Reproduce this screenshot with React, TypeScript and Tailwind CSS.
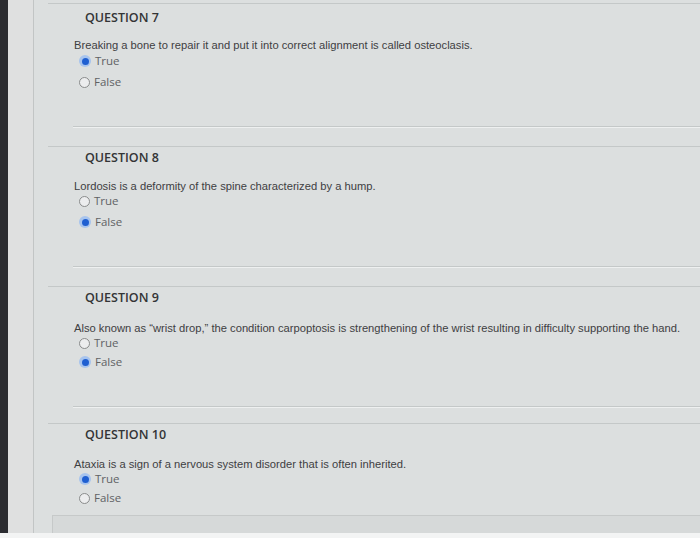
import React from "react";

type Q = { n: number; text: string; sel: "True" | "False"; pt: string; gapText: string; h: string; optMt: string; gap: string };

const qs: Q[] = [
  { n: 7, text: "Breaking a bone to repair it and put it into correct alignment is called osteoclasis.", sel: "True", pt: "pt-[5px]", gapText: "mt-[13px]", h: "h-[143px]", optMt: "mt-[4px]", gap: "gap-[9px]" },
  { n: 8, text: "Lordosis is a deformity of the spine characterized by a hump.", sel: "False", pt: "pt-[2px]", gapText: "mt-[14px]", h: "h-[140px]", optMt: "mt-[3px]", gap: "gap-[9px]" },
  { n: 9, text: "Also known as \u201cwrist drop,\u201d the condition carpoptosis is strengthening of the wrist resulting in difficulty supporting the hand.", sel: "False", pt: "pt-[2px]", gapText: "mt-[16px]", h: "h-[137px]", optMt: "mt-[3px]", gap: "gap-[7px]" },
  { n: 10, text: "Ataxia is a sign of a nervous system disorder that is often inherited.", sel: "True", pt: "pt-[2px]", gapText: "mt-[15px]", h: "h-[92px]", optMt: "mt-[3px]", gap: "gap-[7px]" },
];

function Radio({ on }: { on: boolean }) {
  return on ? (
    <span className="w-[12px] h-[12px] rounded-full bg-[#a7c4ee] flex items-center justify-center">
      <span className="w-[7px] h-[7px] rounded-full bg-[#1f5fd1]" />
    </span>
  ) : (
    <span className="w-[11px] h-[11px] rounded-full border border-[#8a8c8c] bg-[#ecedee]" />
  );
}

function Option({ label, on }: { label: string; on: boolean }) {
  return (
    <div className="flex items-center h-[12px] pl-[31px]">
      <Radio on={on} />
      <span className="ml-[4px] text-[11.5px] leading-[12px] text-[#606264] font-['Open_Sans',sans-serif]">{label}</span>
    </div>
  );
}

function Block({ q, last }: { q: Q; last: boolean }) {
  return (
    <div className={`border-t border-[#c4c8c8] ${q.pt} ${q.h} shrink-0 flex flex-col`}>
      <div className="pl-[37px] text-[12.5px] leading-[18px] font-semibold text-[#333436] font-['Open_Sans',sans-serif]">
        QUESTION {q.n}
      </div>
      <div className={`${q.gapText} pl-[26px] text-[11.2px] leading-[11px] text-[#3e4042] font-['Liberation_Sans',Arial,sans-serif] whitespace-nowrap`}>
        {q.text}
      </div>
      <div className={`flex flex-col ${q.gap} ${q.optMt}`}>
        <Option label="True" on={q.sel === "True"} />
        <Option label="False" on={q.sel === "False"} />
      </div>
      {!last && (
        <div className="mt-[38px] ml-[25px] border-t border-[#c4c8c8] shadow-[0_1px_0_#eef0f0]" />
      )}
    </div>
  );
}

export default function App() {
  return (
    <div className="w-[700px] h-[538px] overflow-hidden flex flex-col bg-[#dcdede]">
      <div className="flex flex-1 min-h-0">
        <div className="w-[8px] bg-[#2b2c30]" />
        <div className="w-[25px] bg-[#dfe0e0]" />
        <div className="flex-1 border-l border-[#c2c5c5] pl-[14px] flex flex-col bg-[#dcdfdf]">
          <div className="h-[3px] shrink-0" />
          {qs.map((q, i) => (
            <Block key={q.n} q={q} last={i === qs.length - 1} />
          ))}
          <div className="flex-1 ml-[4px] border-t border-l border-[#c6c9c9] bg-[#d6d9d9]" />
        </div>
      </div>
      <div className="h-[5px] bg-[#f3f4f4]" />
    </div>
  );
}
